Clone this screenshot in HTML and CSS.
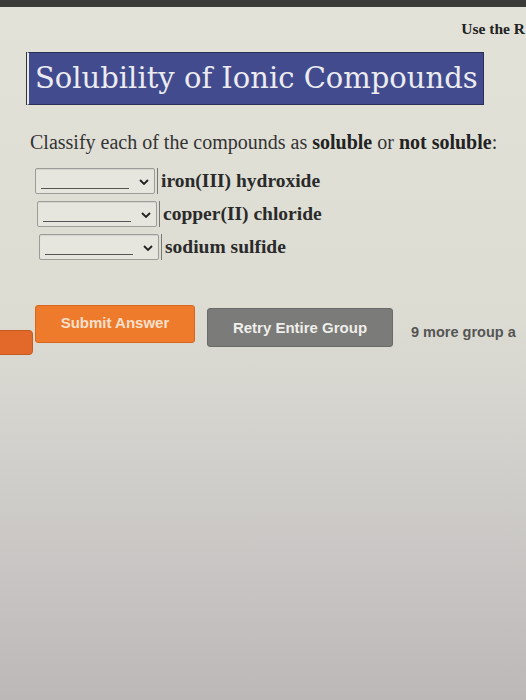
FILE: index.html
```html
<!DOCTYPE html>
<html>
<head>
<meta charset="utf-8">
<link rel="stylesheet" href="styles.css">
</head>
<body>
<div class="topbar"></div>
<div class="page">
  <div class="hint">Use the R</div>
  <h1 class="title">Solubility of Ionic Compounds</h1>
  <p class="prompt">Classify each of the compounds as <b>soluble</b> or <b>not soluble</b>:</p>
  <div class="rows">
    <div class="row r1"><div class="select"><span class="blank"></span><svg class="chev" viewBox="0 0 10 6" width="10" height="6"><path d="M1 1 L5 5 L9 1" fill="none" stroke="#222" stroke-width="1.8"/></svg></div><span class="label">iron(III) hydroxide</span></div>
    <div class="row r2"><div class="select"><span class="blank"></span><svg class="chev" viewBox="0 0 10 6" width="10" height="6"><path d="M1 1 L5 5 L9 1" fill="none" stroke="#222" stroke-width="1.8"/></svg></div><span class="label">copper(II) chloride</span></div>
    <div class="row r3"><div class="select"><span class="blank"></span><svg class="chev" viewBox="0 0 10 6" width="10" height="6"><path d="M1 1 L5 5 L9 1" fill="none" stroke="#222" stroke-width="1.8"/></svg></div><span class="label">sodium sulfide</span></div>
  </div>
  <div class="actions">
    <button class="btn submit">Submit Answer</button>
    <button class="btn retry">Retry Entire Group</button>
    <span class="more">9 more group a</span>
  </div>
  <div class="tab"></div>
</div>
</body>
</html>
```
FILE: styles.css
```css
html, body {
  margin: 0;
  padding: 0;
  height: 100%;
  overflow: hidden;
}
body {
  background: linear-gradient(180deg, #e2e2d9 0%, #dcdcd3 45%, #cfcdca 70%, #bcb8b8 100%);
  font-family: "Liberation Serif", serif;
  color: #2a2a2a;
  width: 526px;
  height: 700px;
}
.topbar {
  height: 7px;
  background: #3a3a38;
}
.page {
  position: relative;
  padding: 13px 0 0 27px;
}
.hint {
  text-align: right;
  font-weight: bold;
  font-size: 15.5px;
  color: #222;
  margin-right: 1px;
  white-space: nowrap;
  line-height: 18px;
}
.title {
  display: inline-block;
  margin: 14px 0 0 0;
  background: #414b8e;
  color: #ecebf0;
  font-family: "DejaVu Serif", serif;
  font-weight: normal;
  font-size: 29px;
  line-height: 51px;
  padding: 0 5px 0 6px;
  border: 1px solid #2a2f55;
  border-left: 2px solid #e8e8ee;
  box-shadow: -1px 0 0 #333;
}
.prompt {
  margin: 24px 0 0 3px;
  font-size: 20px;
  line-height: 26px;
  color: #333;
}
.prompt b { color: #222; }
.rows {
  margin-top: 13px;
  display: flex;
  flex-direction: column;
  gap: 7px;
}
.row {
  display: flex;
  align-items: center;
  gap: 2px;
}
.r1 { margin-left: 8px; }
.r2 { margin-left: 10px; }
.r3 { margin-left: 12px; }
.select {
  width: 120px;
  height: 26px;
  border: 1px solid #9c9c98;
  border-radius: 2px;
  background: #e6e6de;
  box-shadow: inset 0 1px 1px rgba(0,0,0,0.08);
  position: relative;
  display: flex;
  align-items: flex-end;
  padding: 0 0 4px 5px;
  box-sizing: border-box;
  flex-shrink: 0;
}
.blank {
  display: block;
  width: 88px;
  border-bottom: 1px solid #555;
}
.chev {
  position: absolute;
  right: 5px;
  top: 10px;
}
.label {
  font-weight: bold;
  font-size: 19.5px;
  color: #2a2a2a;
  border-left: 1px solid #777;
  padding-left: 3px;
  line-height: 26px;
}
.actions {
  margin-top: 45px;
  margin-left: 8px;
  display: flex;
  align-items: flex-start;
  gap: 12px;
  white-space: nowrap;
}
.btn {
  font-family: "Liberation Sans", Arial, sans-serif;
  font-weight: bold;
  font-size: 15px;
  border-radius: 3px;
  cursor: pointer;
  flex-shrink: 0;
  box-sizing: border-box;
}
.submit {
  width: 160px;
  height: 38px;
  background: #ee7a2c;
  color: #f7e0cc;
  border: 1px solid #d9661e;
  padding: 0 0 4px 0;
}
.retry {
  width: 186px;
  height: 39px;
  background: #7b7b79;
  color: #eeeeea;
  border: 1px solid #6a6a68;
  margin-top: 3px;
}
.more {
  font-family: "Liberation Sans", Arial, sans-serif;
  font-weight: bold;
  font-size: 14.5px;
  color: #555;
  margin-left: 6px;
  margin-top: 19px;
}
.tab {
  position: absolute;
  left: -4px;
  top: 323px;
  width: 37px;
  height: 25px;
  background: #e2692a;
  border-radius: 4px;
  border: 1px solid #c45a22;
  box-sizing: border-box;
}
```
